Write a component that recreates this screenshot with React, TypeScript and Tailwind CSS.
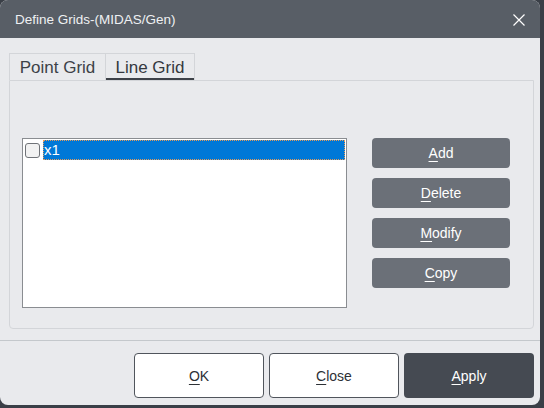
import React from "react";

const font = { fontFamily: '"Liberation Sans", Arial, sans-serif' };

function SideButton({ first, rest }: { first: string; rest: string }) {
  return (
    <button className="w-[138px] h-[30px] rounded-[4px] bg-[#6b7078] text-white text-[14px] flex items-center justify-center leading-none">
      <span className="underline underline-offset-[3px]">{first}</span>
      {rest}
    </button>
  );
}

function BottomButton({ first, rest, dark }: { first: string; rest: string; dark?: boolean }) {
  return (
    <button
      className={
        dark
          ? "w-[130px] h-[45px] rounded-[4px] bg-[#454a52] text-white text-[14px] flex items-center justify-center leading-none"
          : "w-[130px] h-[45px] rounded-[4px] bg-white border border-[#50555c] text-[#2d3136] text-[14px] flex items-center justify-center leading-none"
      }
    >
      <span className="underline underline-offset-[3px]">{first}</span>
      {rest}
    </button>
  );
}

export default function App() {
  return (
    <div className="w-[544px] h-[408px] bg-[#3a3f47] overflow-hidden" style={font}>
      <div className="w-[540px] h-[405px] bg-[#e9eaed] rounded-[8px] overflow-hidden flex flex-col">
        {/* Title bar */}
        <div className="h-[38px] bg-[#585e66] flex items-center justify-between pl-[15px] pr-[15px] shrink-0">
          <span className="text-[13.5px] text-[#eef0f2] pt-[3px]">Define Grids-(MIDAS/Gen)</span>
          <svg width="12" height="12" viewBox="0 0 12 12" className="mt-[1px]">
            <path d="M0.5 0.5 L11.5 11.5 M11.5 0.5 L0.5 11.5" stroke="#ffffff" strokeWidth="1.2" />
          </svg>
        </div>

        {/* Tabs */}
        <div className="flex ml-[9px] mt-[15px] h-[27px]">
          <div className="w-[96px] h-[27px] border-t border-l border-[#d3d5d9] flex items-center justify-center text-[17px] leading-none text-[#3d4248] pt-[1px]">
            Point Grid
          </div>
          <div className="w-[90px] h-[27px] border-t border-l border-r border-[#d3d5d9] flex flex-col">
            <div className="h-[24px] flex items-center justify-center text-[17px] leading-none text-[#34383e] pt-[2px]">
              Line Grid
            </div>
            <div className="h-[2px] bg-[#3d4148]" />
          </div>
        </div>

        {/* Panel */}
        <div className="ml-[9px] w-[525px] h-[249px] border border-[#d3d5d9] rounded-b-[4px] flex pl-[12px] pt-[57px]">
          <div className="w-[325px] h-[170px] border border-[#8a8d91] bg-white pt-[1px] pl-[2px] pr-[1px]">
            <div className="flex items-center h-[20px]">
              <div className="w-[15px] h-[15px] rounded-[3px] border border-[#707378] bg-[#f2f2f2] mt-[1px]" />
              <div className="flex-1 h-[20px] ml-[3px] bg-[#0078d7] border border-dotted border-[#e59b5a] text-white text-[15px] leading-[18px] flex items-center">
                x1
              </div>
            </div>
          </div>
          <div className="ml-[25px] flex flex-col gap-[10px]">
            <SideButton first="A" rest="dd" />
            <SideButton first="D" rest="elete" />
            <SideButton first="M" rest="odify" />
            <SideButton first="C" rest="opy" />
          </div>
        </div>

        {/* Separator */}
        <div className="mt-[11px] h-[1px] bg-[#c4c8cc]" />

        {/* Bottom buttons */}
        <div className="flex ml-[134px] mt-[12px] gap-[5px]">
          <BottomButton first="O" rest="K" />
          <BottomButton first="C" rest="lose" />
          <BottomButton first="A" rest="pply" dark />
        </div>
      </div>
    </div>
  );
}
